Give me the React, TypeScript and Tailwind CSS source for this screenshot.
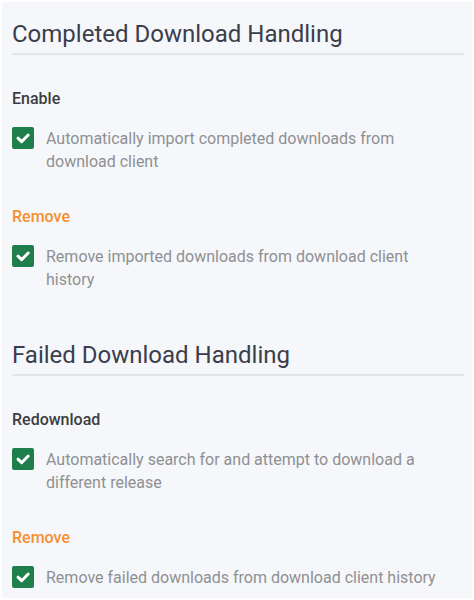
const sections = [
  {
    title: "Completed Download Handling",
    groups: [
      {
        label: "Enable",
        warning: false,
        text: "Automatically import completed downloads from download client",
      },
      {
        label: "Remove",
        warning: true,
        text: "Remove imported downloads from download client history",
      },
    ],
  },
  {
    title: "Failed Download Handling",
    groups: [
      {
        label: "Redownload",
        warning: false,
        text: "Automatically search for and attempt to download a different release",
      },
      {
        label: "Remove",
        warning: true,
        text: "Remove failed downloads from download client history",
      },
    ],
  },
];

function CheckBox() {
  return (
    <div className="flex h-[22px] w-[22px] shrink-0 items-center justify-center rounded-[2px] bg-[#1f7f4c]">
      <svg width="22" height="22" viewBox="0 0 22 22" fill="none">
        <path
          d="M6 11.2l3.6 3.5L16.2 8"
          stroke="white"
          strokeWidth="3"
          strokeLinecap="round"
          strokeLinejoin="round"
        />
      </svg>
    </div>
  );
}

export default function App() {
  return (
    <div className="h-[600px] w-[474px] overflow-hidden bg-white p-[2px] font-['Roboto',sans-serif]">
      <div className="h-full bg-[#f6f7fa] pl-[10px] pr-[8px] pt-[17px]">
        {sections.map((section, i) => (
          <section key={section.title} className={i > 0 ? "mt-[49px]" : ""}>
            {/* Section title */}
            <h2 className="border-b-2 border-[#e4e5ea] pb-[4px] text-[24px] leading-[30px] font-normal text-[#3a3e4b]">
              {section.title}
            </h2>

            {section.groups.map((group) => (
              <div key={group.text} className="mt-[34px]">
                <div
                  className={
                    group.warning
                      ? "text-[16px] leading-[20px] font-medium text-[#f4902f]"
                      : "text-[16px] leading-[20px] font-medium text-[#3c3d40]"
                  }
                >
                  {group.label}
                </div>
                <div className="mt-[18px] flex items-start gap-[12px]">
                  <CheckBox />
                  <p className="pr-[14px] text-[16px] leading-[23px] text-[#8e9093]">
                    {group.text}
                  </p>
                </div>
              </div>
            ))}
          </section>
        ))}
      </div>
    </div>
  );
}
